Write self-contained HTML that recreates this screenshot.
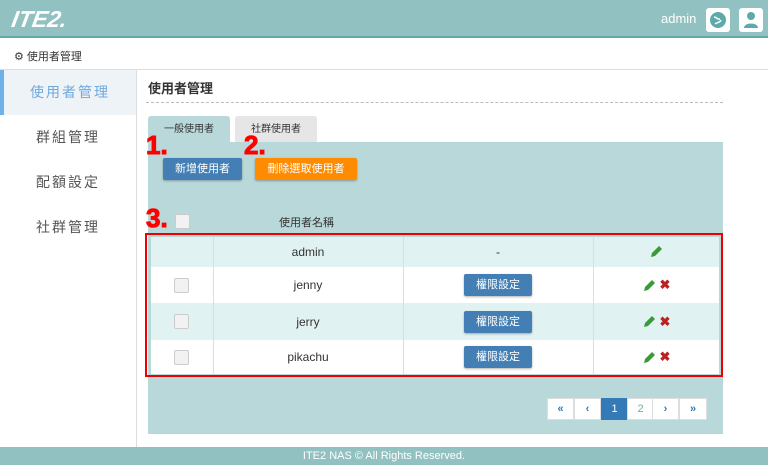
<!DOCTYPE html>
<html><head><meta charset="utf-8"><style>
*{box-sizing:border-box;margin:0;padding:0}
body{width:768px;height:465px;overflow:hidden;background:#fff;font-family:"Liberation Sans","Noto Sans CJK TC",sans-serif;color:#333;position:relative}
.a{position:absolute}
.hdr{left:0;top:0;width:768px;height:38px;background:#92c1c2;border-bottom:2px solid #5fa9aa}
.logo{left:12px;top:6px;font:italic 900 23px "Liberation Sans",sans-serif;color:#fff;letter-spacing:0px;transform:skewX(-10deg)}
.ic{top:8px;width:24px;height:24px;background:#fff;border-radius:3px}
.crumb{left:0;top:40px;width:768px;height:30px;border-bottom:1px solid #ddd;font-size:11px;padding:8px 0 0 14px}
.side{left:0;top:70px;width:137px;height:377px;border-right:1px solid #ddd}
.si{position:absolute;left:0;width:136px;height:45px;text-align:center;font-size:14px;color:#555;line-height:45px;letter-spacing:2px}
.btn{color:#fff;font-size:11px;text-align:center;line-height:22px;border-radius:2px;box-shadow:0 1px 2px rgba(0,0,0,.3)}
.cb{width:15px;height:15px;border:1px solid #ccc;background:#f2f2f2;border-radius:2px}
td{font-size:12px;text-align:center;border-left:1px solid #ddd;color:#333}
td:first-child{border-left:none}
.pg{top:398px;height:22px;width:27px;background:#fff;border:1px solid #ddd;font-size:11px;text-align:center;line-height:20px;color:#337ab7;font-weight:bold}
.num{color:#f00;font:bold 26px "Liberation Sans",sans-serif;-webkit-text-stroke:1px #f00}
.pen{display:inline-block;vertical-align:middle}
</style></head><body>
<div class="a hdr"></div>
<div class="a logo">ITE2.</div>
<div class="a" style="left:661px;top:11px;font-size:13px;color:#fff">admin</div>
<div class="a ic" style="left:706px"><svg width="24" height="24"><circle cx="12" cy="12" r="8" fill="#5fa9aa"/><path d="M8 9c3 0 3 3 6 2M9 16c2-2 5-1 6-4" stroke="#fff" stroke-width="1.5" fill="none"/></svg></div>
<div class="a ic" style="left:739px"><svg width="24" height="24"><circle cx="12" cy="8" r="4" fill="#5fa9aa"/><path d="M5 20c0-6 14-6 14 0z" fill="#5fa9aa"/></svg></div>
<div class="a crumb">⚙ 使用者管理</div>
<div class="a side">
<div class="si" style="top:0;background:#eef3f8;color:#6fa8dc;border-left:4px solid #6fb0e8">使用者管理</div>
<div class="si" style="top:45px">群組管理</div>
<div class="si" style="top:90px">配額設定</div>
<div class="si" style="top:135px">社群管理</div>
</div>
<div class="a" style="left:148px;top:78px;font-size:13px;font-weight:bold;color:#333">使用者管理</div>
<div class="a" style="left:146px;top:102px;width:577px;border-top:1px dashed #bbb"></div>
<div class="a" style="left:148px;top:116px;width:82px;height:27px;background:#b9d8d9;border-radius:3px 3px 0 0;font-size:10px;text-align:center;line-height:28px">一般使用者</div>
<div class="a" style="left:235px;top:116px;width:82px;height:26px;background:#e6e6e6;border-radius:3px 3px 0 0;font-size:10px;text-align:center;line-height:28px">社群使用者</div>
<div class="a" style="left:148px;top:142px;width:575px;height:292px;background:#b9d8d9"></div>
<div class="a btn" style="left:163px;top:158px;width:79px;background:#437fb5">新增使用者</div>
<div class="a btn" style="left:255px;top:158px;width:102px;background:#ff8c00">刪除選取使用者</div>
<div class="a num" style="left:146px;top:130px">1.</div>
<div class="a num" style="left:244px;top:130px">2.</div>
<div class="a num" style="left:146px;top:203px">3.</div>
<div class="a cb" style="left:175px;top:214px"></div>
<div class="a" style="left:279px;top:214px;font-size:11px">使用者名稱</div>
<div class="a" style="left:145px;top:233px;width:578px;height:144px;border:2px solid #e00"></div>
<table class="a" style="left:151px;top:237px;width:568px;border-collapse:collapse">
<tr style="height:30px;background:#e1f2f2"><td style="width:62px"></td><td style="width:190px">admin</td><td style="width:190px">-</td><td><svg class="pen" width="14" height="14"><path d="M2 12l1-4 7-7 3 3-7 7z" fill="#3a9a3a"/></svg></td></tr>
<tr style="height:36px;background:#fff"><td><div class="cb" style="margin:auto"></div></td><td>jenny</td><td><div class="btn" style="width:68px;margin:auto;background:#437fb5">權限設定</div></td><td><svg class="pen" width="14" height="14"><path d="M2 12l1-4 7-7 3 3-7 7z" fill="#3a9a3a"/></svg> <b style="color:#b22;font-size:13px">✖</b></td></tr>
<tr style="height:37px;background:#e1f2f2"><td><div class="cb" style="margin:auto"></div></td><td>jerry</td><td><div class="btn" style="width:68px;margin:auto;background:#437fb5">權限設定</div></td><td><svg class="pen" width="14" height="14"><path d="M2 12l1-4 7-7 3 3-7 7z" fill="#3a9a3a"/></svg> <b style="color:#b22;font-size:13px">✖</b></td></tr>
<tr style="height:34px;background:#fff"><td><div class="cb" style="margin:auto"></div></td><td>pikachu</td><td><div class="btn" style="width:68px;margin:auto;background:#437fb5">權限設定</div></td><td><svg class="pen" width="14" height="14"><path d="M2 12l1-4 7-7 3 3-7 7z" fill="#3a9a3a"/></svg> <b style="color:#b22;font-size:13px">✖</b></td></tr>
</table>
<div class="a pg" style="left:547px">«</div>
<div class="a pg" style="left:574px">‹</div>
<div class="a pg" style="left:601px;background:#337ab7;color:#fff;border-color:#337ab7;font-weight:normal">1</div>
<div class="a pg" style="left:627px;color:#7aa;font-weight:normal">2</div>
<div class="a pg" style="left:652px">›</div>
<div class="a pg" style="left:679px;width:28px">»</div>
<div class="a" style="left:0;top:447px;width:768px;height:18px;background:#92c1c2;color:#fff;font-size:11px;text-align:center;line-height:18px">ITE2 NAS © All Rights Reserved.</div>
</body></html>
